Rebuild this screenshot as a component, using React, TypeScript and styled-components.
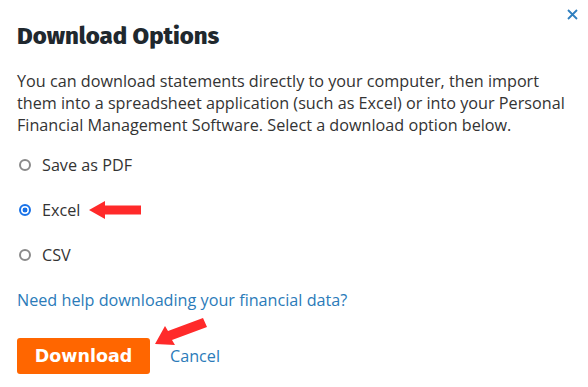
import styled, { createGlobalStyle } from "styled-components";

const GlobalStyle = createGlobalStyle`
  html, body { margin: 0; padding: 0; background: #fff; }
  body { font-family: "Open Sans", "DejaVu Sans", sans-serif; }
`;

const options = [
  { id: "pdf", label: "Save as PDF", checked: false },
  { id: "excel", label: "Excel", checked: true },
  { id: "csv", label: "CSV", checked: false },
];

function LeftArrow() {
  return (
    <svg width="52" height="18" viewBox="0 0 52 18">
      <polygon points="0,9 16,0 16,4.5 52,4.5 52,13.5 16,13.5 16,18" fill="#ff2a2a" />
    </svg>
  );
}

function DiagonalArrow() {
  return (
    <svg width="56" height="30" viewBox="0 0 56 30">
      <polygon points="0,27 10,9 13,14 48,1 52,10 17,23 20,28" fill="#ff2a2a" />
    </svg>
  );
}

export default function App() {
  return (
    <>
      <GlobalStyle />
      <Dialog>
        <Close aria-label="Close">
          <svg width="11" height="11" viewBox="0 0 11 11">
            <path d="M1 1 L10 10 M10 1 L1 10" stroke="#2f7fbf" strokeWidth="1.8" />
          </svg>
        </Close>
        <Title>Download Options</Title>
        <Text>
          You can download statements directly to your computer, then import
          <br />
          them into a spreadsheet application (such as Excel) or into your Personal
          <br />
          Financial Management Software. Select a download option below.
        </Text>
        <Options>
          {options.map((o) => (
            <Option key={o.id}>
              <Radio $checked={o.checked} />
              <OptionLabel>{o.label}</OptionLabel>
              {o.checked && (
                <ArrowWrap>
                  <LeftArrow />
                </ArrowWrap>
              )}
            </Option>
          ))}
        </Options>
        <HelpLink>Need help downloading your financial data?</HelpLink>
        <Actions>
          <DownloadButton>Download</DownloadButton>
          <CancelLink>Cancel</CancelLink>
          <DiagArrowWrap>
            <DiagonalArrow />
          </DiagArrowWrap>
        </Actions>
      </Dialog>
    </>
  );
}

const Dialog = styled.div`
  position: relative;
  width: 588px;
  height: 387px;
  box-sizing: border-box;
  padding: 22px 17px 0 17px;
  color: #333;
`;

const Close = styled.button`
  position: absolute;
  top: 9px;
  right: 10px;
  border: 0;
  background: none;
  padding: 0;
  display: flex;
  cursor: pointer;
`;

const Title = styled.h2`
  margin: 0;
  font-family: "Fira Sans", "DejaVu Sans", sans-serif;
  font-weight: 800;
  font-size: 24px;
  line-height: 28px;
  color: #20282e;
`;

const Text = styled.p`
  margin: 20px 0 0;
  white-space: nowrap;
  font-size: 16.2px;
  line-height: 22px;
  color: #333;
`;

const Options = styled.div`
  margin-top: 18px;
  display: flex;
  flex-direction: column;
  gap: 23px;
`;

const Option = styled.label`
  display: flex;
  align-items: center;
  height: 22px;
  font-size: 16.2px;
  color: #333;
`;

const Radio = styled.span<{ $checked: boolean }>`
  flex-shrink: 0;
  box-sizing: border-box;
  width: 12px;
  height: 12px;
  margin: 0 11px 0 2px;
  border-radius: 50%;
  border: 2px solid ${(p) => (p.$checked ? "#1a73e8" : "#8a8a8a")};
  background: ${(p) => (p.$checked ? "radial-gradient(circle, #1a73e8 2.2px, #fff 2.7px)" : "#fff")};
`;

const OptionLabel = styled.span``;

const ArrowWrap = styled.span`
  display: flex;
  margin-left: 9px;
`;

const HelpLink = styled.a`
  display: block;
  margin-top: 23px;
  font-size: 16.2px;
  line-height: 22px;
  color: #2b7bb9;
`;

const Actions = styled.div`
  position: relative;
  margin-top: 27px;
  display: flex;
  align-items: center;
  gap: 20px;
`;

const DownloadButton = styled.button`
  width: 133px;
  height: 36px;
  border: 0;
  border-radius: 3px;
  background: #ff6600;
  color: #fff;
  font-family: "DejaVu Sans", sans-serif;
  font-weight: bold;
  font-size: 17.5px;
`;

const CancelLink = styled.a`
  font-size: 16.2px;
  color: #2b7bb9;
`;

const DiagArrowWrap = styled.span`
  position: absolute;
  left: 138px;
  top: -21px;
  display: flex;
`;
